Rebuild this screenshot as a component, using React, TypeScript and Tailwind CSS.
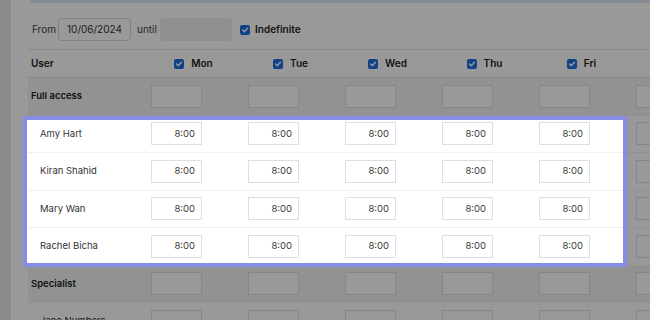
import { Fragment } from 'react';

const days = ['Mon', 'Tue', 'Wed', 'Thu', 'Fri', ''];

type Row = { name: string; group?: boolean; hours?: string };

const before: Row[] = [{ name: 'Full access', group: true }];
const focused: Row[] = [
  { name: 'Amy Hart', hours: '8:00' },
  { name: 'Kiran Shahid', hours: '8:00' },
  { name: 'Mary Wan', hours: '8:00' },
  { name: 'Rachel Bicha', hours: '8:00' },
];
const after: Row[] = [
  { name: 'Specialist', group: true },
  { name: 'Jane Numbers' },
];

function Check() {
  return (
    <span className="flex h-[10px] w-[10px] shrink-0 items-center justify-center rounded-[2px] bg-[#1f6fe0]">
      <svg viewBox="0 0 10 10" className="h-[10px] w-[10px]">
        <path d="M2.6 5.1 4.3 6.8 7.5 3.3" fill="none" stroke="white" strokeWidth="1.4" strokeLinecap="round" strokeLinejoin="round" />
      </svg>
    </span>
  );
}

function TableRow({ row }: { row: Row }) {
  return (
    <div
      className={`grid h-[37.5px] grid-cols-[117px_repeat(6,97px)] items-center border-b border-[#eef0f2] ${
        row.group ? 'bg-[#f3f4f6]' : 'bg-white'
      }`}
    >
      <div className={row.group ? 'pl-[3px] font-semibold text-[#222]' : 'pl-[12px] text-[#333]'}>{row.name}</div>
      {days.map((d, i) => (
        <div key={i} className="pl-[6px]">
          <div className="flex h-[23px] w-[51px] items-center justify-end border border-[#dcdfe4] bg-white pr-[6px] text-[#3a3a3a]">
            {d ? row.hours ?? '' : ''}
          </div>
        </div>
      ))}
    </div>
  );
}

export default function App() {
  return (
    <div className="flex h-[320px] w-[650px] overflow-hidden bg-[#e6e8eb] font-['Inter',sans-serif] text-[9.5px] text-[#2b2b2b]">
      <div className="ml-[11px] min-w-0 flex-1 bg-white pl-[17px]">
        <div className="ml-[2px] h-[3px] bg-[#dde8f3]" />

        <div className="flex items-center border-b border-[#e3e5e8] pb-[8px] pl-[4px] pt-[15px] text-[10px]">
          <span className="w-[26px] text-[#444]">From</span>
          <div className="flex h-[23px] w-[73px] items-center rounded-[4px] border border-[#d4d7dc] pl-[8px] text-[#333]">
            10/06/2024
          </div>
          <span className="ml-[6px] w-[23px] text-[#444]">until</span>
          <div className="h-[23px] w-[72px] rounded-[4px] bg-[#eeeff2]" />
          <span className="ml-[8px]">
            <Check />
          </span>
          <span className="ml-[5px] font-semibold text-[#222]">Indefinite</span>
        </div>

        <div className="grid h-[28px] grid-cols-[117px_repeat(6,97px)] items-center border-b border-[#e3e5e8] text-[10px]">
          <div className="pl-[3px] font-semibold text-[#222]">User</div>
          {days.map((d, i) => (
            <div key={i} className="flex items-center justify-center gap-[7px]">
              {d && <Check />}
              {d && <span className="font-semibold text-[#222]">{d}</span>}
            </div>
          ))}
        </div>

        {before.map((r) => (
          <TableRow key={r.name} row={r} />
        ))}

        <div className="relative">
          {focused.map((r) => (
            <Fragment key={r.name}>
              <TableRow row={r} />
            </Fragment>
          ))}
          <div className="pointer-events-none absolute left-[-5px] top-0 z-10 h-[151px] w-[604px] border-[4px] border-[#878de4] shadow-[0_0_0_2000px_rgba(0,0,0,0.4)]" />
        </div>

        {after.map((r) => (
          <TableRow key={r.name} row={r} />
        ))}
      </div>
    </div>
  );
}
